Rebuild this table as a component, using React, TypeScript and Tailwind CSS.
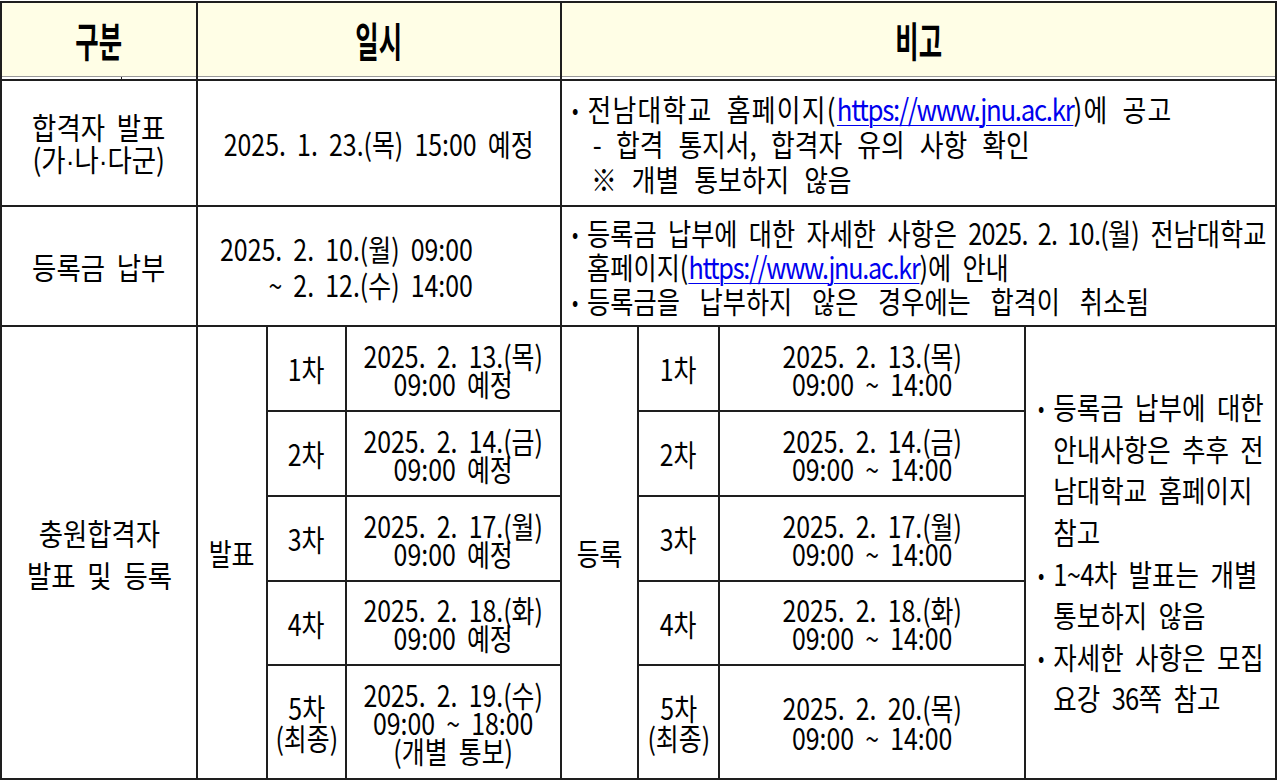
import React from "react";

const link = "https://www.jnu.ac.kr";

const announce = [
    { no: "1차", date: "2025.  2.  13.(목)", time: "09:00  예정" },
    { no: "2차", date: "2025.  2.  14.(금)", time: "09:00  예정" },
    { no: "3차", date: "2025.  2.  17.(월)", time: "09:00  예정" },
    { no: "4차", date: "2025.  2.  18.(화)", time: "09:00  예정" },
];

const register = ["2025.  2.  13.(목)", "2025.  2.  14.(금)", "2025.  2.  17.(월)", "2025.  2.  18.(화)"];

function Cell({ children, className = "" }: { children?: React.ReactNode; className?: string }) {
    return <div className={"bg-white flex items-center justify-center " + className}>{children}</div>;
}

function Txt({ children, className = "" }: { children: React.ReactNode; className?: string }) {
    return <div className={"scale-x-[0.83] whitespace-pre text-center " + className}>{children}</div>;
}

// latin / digit runs are set a little tighter than the hangul
function T({ s }: { s: string }) {
    const parts = s.split(/([\x21-\x7e][\x20-\x7e]*[\x21-\x7e]|[\x21-\x7e])/);
    return (
        <>
            {parts.map((p, i) =>
                i % 2 === 1 ? <span key={i} className="tracking-[-0.8px]">{p}</span> : <React.Fragment key={i}>{p}</React.Fragment>
            )}
        </>
    );
}

function Link() {
    return <span className="text-[#0000ee] underline decoration-1 underline-offset-[4px] tracking-[-1.5px]">{link}</span>;
}

function Bullet({ children }: { children: React.ReactNode }) {
    return (
        <div className="flex">
            <span className="w-[18px] text-[22px] tracking-normal">•</span>
            <span>{children}</span>
        </div>
    );
}

function Header({ children, tick }: { children: React.ReactNode; tick?: boolean }) {
    return (
        <div className="bg-white flex flex-col">
            <div className="flex-1 bg-[#fffee6] flex items-center justify-center">
                <div className="scale-x-[0.62] font-bold text-[41px] leading-none">{children}</div>
            </div>
            <div className="h-px bg-[#9a9a9a]" />
            <div className="h-[2px] flex">
                {tick && <div className="ml-[119px] w-px bg-[#222]" />}
            </div>
        </div>
    );
}

export default function App() {
    return (
        <div className="bg-white w-[1280px] h-[783px] font-['Noto_Sans_CJK_KR',sans-serif] text-black text-[30px] pt-px">
            <div className="w-[1277px] grid grid-cols-[194px_68px_77px_213px_75px_79px_304px_249px] grid-rows-[76px_124px_118px_83px_83px_83px_82px_112px] gap-[2px] p-[2px] bg-[#1e1e1e]">
                {/* header */}
                <Header tick>구분</Header>
                <div className="col-span-3 grid"><Header>일시</Header></div>
                <div className="col-span-4 grid"><Header>비고</Header></div>

                {/* 합격자 발표 */}
                <Cell>
                    <Txt className="!scale-x-[0.88] leading-[32px]">
                        {"합격자  발표\n(가"}
                        <span className="font-['Liberation_Sans']">·</span>나
                        <span className="font-['Liberation_Sans']">·</span>
                        {"다군)"}
                    </Txt>
                </Cell>
                <Cell className="col-span-3">
                    <Txt>{"2025.  1.  23.(목)  15:00  예정"}</Txt>
                </Cell>
                <Cell className="col-span-4 !justify-start pl-[10px]">
                    <div className="origin-left scale-x-[0.86] whitespace-pre leading-[35px]">
                        <div className="tracking-[1.5px]">
                            <Bullet>
                                전남대학교  홈페이지(<Link />)에  공고
                            </Bullet>
                        </div>
                        <div className="pl-[24px] [word-spacing:2px]"><T s="-  합격  통지서,  합격자  유의  사항  확인" /></div>
                        <div className="pl-[22px] [word-spacing:2px]">※  개별  통보하지  않음</div>
                    </div>
                </Cell>

                {/* 등록금 납부 */}
                <Cell>
                    <Txt className="!scale-x-[0.88]">{"등록금  납부"}</Txt>
                </Cell>
                <Cell className="col-span-3 !justify-start pl-[22px]">
                    <Txt className="origin-left leading-[36px] !text-right">{"2025.  2.  10.(월)  09:00\n~  2.  12.(수)  14:00"}</Txt>
                </Cell>
                <Cell className="col-span-4 !justify-start pl-[10px]">
                    <div className="origin-left scale-x-[0.84] whitespace-pre leading-[34px]">
                        <Bullet>
                            <T s="등록금  납부에  대한  자세한  사항은  2025.  2.  10.(월)  전남대학교" />
                        </Bullet>
                        <div className="pl-[18px]">
                            홈페이지(<Link />)에  안내
                        </div>
                        <div className="[word-spacing:5px]">
                            <Bullet>등록금을  납부하지  않은  경우에는  합격이  취소됨</Bullet>
                        </div>
                    </div>
                </Cell>

                {/* 충원합격자 */}
                <Cell className="row-span-5">
                    <Txt className="!scale-x-[0.88] leading-[42px]">{"충원합격자\n발표  및  등록"}</Txt>
                </Cell>
                <Cell className="row-span-5">
                    <Txt>발표</Txt>
                </Cell>
                <Cell>
                    <Txt>{announce[0].no}</Txt>
                </Cell>
                <Cell>
                    <Txt className="leading-[28px]">{announce[0].date + "\n" + announce[0].time}</Txt>
                </Cell>
                <Cell className="row-span-5">
                    <Txt>등록</Txt>
                </Cell>
                <Cell>
                    <Txt>1차</Txt>
                </Cell>
                <Cell>
                    <Txt className="leading-[28px]">{register[0] + "\n09:00  ~  14:00"}</Txt>
                </Cell>
                <Cell className="row-span-5 !justify-start pl-[12px]">
                    <div className="origin-left scale-x-[0.85] whitespace-pre leading-[41.6px]">
                        <Bullet>{"등록금  납부에  대한\n안내사항은  추후  전\n남대학교  홈페이지\n참고"}</Bullet>
                        <Bullet><T s={"1~4차  발표는  개별\n통보하지  않음"} /></Bullet>
                        <Bullet><T s={"자세한  사항은  모집\n요강  36쪽  참고"} /></Bullet>
                    </div>
                </Cell>

                {announce.slice(1).map((a, i) => (
                    <React.Fragment key={a.no}>
                        <Cell>
                            <Txt>{a.no}</Txt>
                        </Cell>
                        <Cell>
                            <Txt className="leading-[28px]">{a.date + "\n" + a.time}</Txt>
                        </Cell>
                        <Cell>
                            <Txt>{a.no}</Txt>
                        </Cell>
                        <Cell>
                            <Txt className="leading-[28px]">{register[i + 1] + "\n09:00  ~  14:00"}</Txt>
                        </Cell>
                    </React.Fragment>
                ))}

                {/* 5차 */}
                <Cell>
                    <Txt className="leading-[30px]">{"5차\n(최종)"}</Txt>
                </Cell>
                <Cell>
                    <Txt className="leading-[28px]">{"2025.  2.  19.(수)\n09:00  ~  18:00\n(개별  통보)"}</Txt>
                </Cell>
                <Cell>
                    <Txt className="leading-[30px]">{"5차\n(최종)"}</Txt>
                </Cell>
                <Cell>
                    <Txt className="leading-[30px]">{"2025.  2.  20.(목)\n09:00  ~  14:00"}</Txt>
                </Cell>
            </div>
        </div>
    );
}
